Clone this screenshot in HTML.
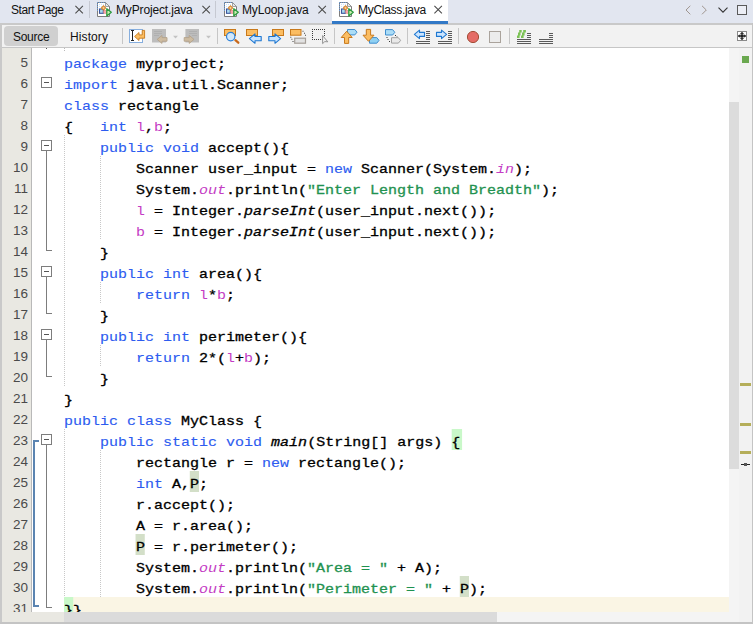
<!DOCTYPE html>
<html lang="en"><head><meta charset="utf-8"><title>MyClass.java - NetBeans</title>
<style>
html,body{margin:0;padding:0;background:#fff;}
body{width:756px;height:624px;overflow:hidden;position:relative;font-family:"Liberation Sans",sans-serif;}
#app{position:absolute;left:0;top:0;width:753px;height:624px;overflow:hidden;background:#f2f2f2;}
#app div,#app span,#app svg{box-sizing:border-box;}
#tabbar{position:absolute;left:0;top:0;width:756px;height:23px;background:#e2e6f0;}
#tabline{position:absolute;left:0;top:23px;width:756px;height:2px;background:#c9c9c9;}
#leftedge{position:absolute;left:0;top:23px;width:2px;height:601px;background:#c9c9c9;}
#toolbar{position:absolute;left:2px;top:25px;width:750px;height:22px;background:#f2f2f2;}
#tbline{position:absolute;left:2px;top:47px;width:750px;height:1px;background:#c6c6c6;}
#editor{position:absolute;left:2px;top:48px;width:727px;height:564px;background:#fff;overflow:hidden;}
#gutter{position:absolute;left:0;top:0;width:30px;height:564px;background:#e9e8e2;border-right:1px solid #b9b9b9;}
.num{position:absolute;right:3px;width:26px;height:21px;line-height:21px;margin-top:4px;text-align:right;font-size:13.5px;color:#4a4a4a;}
#curline{position:absolute;left:62px;top:549px;width:665px;height:15px;background:#faf5e4;}
#code{position:absolute;left:62px;top:6px;width:600px;height:570px;font-family:"Liberation Mono",monospace;font-size:13px;font-weight:normal;-webkit-text-stroke:0.3px #000;color:#000;transform:scaleX(1.153846);transform-origin:0 0;}
.ln{position:absolute;left:0;height:21px;line-height:21px;white-space:pre;}
.k{color:#2d5cf0;font-weight:normal;-webkit-text-stroke:0.12px #2d5cf0;}
.f{color:#c43cc4;font-weight:normal;-webkit-text-stroke:0;}
.sf{color:#c43cc4;font-weight:normal;font-style:italic;-webkit-text-stroke:0;}
.sm{font-style:italic;}
.s{color:#1f9250;-webkit-text-stroke:0.3px #1f9250;}
.hl,.hb{display:inline-block;height:21px;vertical-align:top;position:relative;}
.hl::before,.hb::before{content:"";position:absolute;left:0;right:0;top:-3px;height:21px;background:#d3dfc8;z-index:-1;}
.hb::before{background:#c9f8c9;}
.ig{position:absolute;width:1px;background-image:linear-gradient(to bottom,#c8c8c8 50%,transparent 50%);background-size:1px 2px;}
#guides{position:absolute;left:-2px;top:0;}
#folds{position:absolute;left:0;top:0;}
.fb{position:absolute;left:39px;width:11px;height:11px;border:1px solid #7d7d7d;background:#fff;}
.fb i{position:absolute;left:2px;top:4px;width:5px;height:1px;background:#555;}
.fl{position:absolute;left:44px;width:1px;background:#7d7d7d;}
.fe{position:absolute;left:44px;width:6px;height:1px;background:#7d7d7d;}
#vscroll{position:absolute;left:729px;top:48px;width:10px;height:564px;background:#f4f4f4;}
#vthumb{position:absolute;left:0;top:54px;width:10px;height:367px;background:#dcdcdc;}
#stripe{position:absolute;left:739px;top:48px;width:13px;height:574px;background:#f2f2f2;}
#stripe .ok{position:absolute;left:3px;top:8px;width:7px;height:7px;background:#6aa84f;}
#stripe .mk{position:absolute;left:1px;width:11px;height:3px;background:#b5ae5a;}
#stripe .caret{position:absolute;left:2px;top:416px;width:9px;height:1px;background:#222;}
#stripe .caret b{position:absolute;left:3px;top:-1px;width:3px;height:3px;background:#555;}
#rightedge{position:absolute;left:752px;top:23px;width:1px;height:601px;background:#c4c4c4;}
#hscroll{position:absolute;left:2px;top:612px;width:727px;height:10px;background:#f4f4f4;border-left:62px solid #e9e8e2;}
#hthumb{position:absolute;left:0;top:0;width:433px;height:10px;background:#dbdbdb;}
#corner{position:absolute;left:729px;top:612px;width:10px;height:10px;background:#f4f4f4;}
#bottomedge{position:absolute;left:0;top:622px;width:753px;height:2px;background:#c4c4c4;}
.tab{position:absolute;top:0;height:23px;}
.tab.sel{background:#fff;}
.tt{position:absolute;top:0;height:23px;line-height:20px;font-size:12px;color:#111;white-space:nowrap;}
.tx{position:absolute;top:5px;}
.ti{position:absolute;top:2px;}
.tsep{position:absolute;top:1px;width:1px;height:17px;background:#c6c9d2;}
#tabsel{position:absolute;left:332px;top:21px;width:116px;height:3px;background:#3279c6;z-index:3;}
#tabctl{position:absolute;left:682px;top:4px;}
#srcbtn{position:absolute;left:2px;top:1px;width:54px;height:20px;border-radius:4px;background:#d0d0d0;}
.tbt{position:absolute;top:0;height:22px;line-height:25px;font-size:12px;color:#111;white-space:nowrap;}
#tbicons{position:absolute;left:0;top:0;}
#brk{position:absolute;left:31px;top:392px;width:6px;height:167px;border:2px solid #5b84b1;border-right:0;}
.dot{position:absolute;width:1px;height:1px;}
.hb.w::before{right:-1.6px;}

</style></head>
<body>
<div id="app">
<div id="tabbar">
<svg width="0" height="0" style="position:absolute"><defs>
<g id="jicon">
  <path d="M0.5 0.5H8.5L12.5 4.5V14.5H0.5Z" fill="#fff" stroke="#7d7d7d"/>
  <path d="M8.5 0.5V4.5H12.5Z" fill="#e9e9e9" stroke="#8a8a8a" stroke-width="0.8"/>
  <path d="M2 2.5h5M2 4.5h3" stroke="#cfe3f7" stroke-width="1" stroke-dasharray="1 1"/>
  <path d="M0.5 0V10M0 0.5H8.5" fill="none" stroke="#6d9bd6" stroke-dasharray="1 1" stroke-width="1"/>
  <rect x="2.5" y="7" width="3.8" height="4.3" fill="#a9d8ee" stroke="#3c559c" stroke-width="1.1"/>
  <rect x="5" y="4.4" width="3" height="3" transform="rotate(45 6.5 5.9)" fill="#f6cf95" stroke="#d5822a" stroke-width="1"/>
  <circle cx="8.1" cy="9.9" r="1.6" fill="#f9a7b4" stroke="#e0806a" stroke-width="0.6"/>
  <path d="M9.8 6.7V13.9L14.3 10.3Z" fill="#cdf0b4" stroke="#2d9a3f" stroke-width="1.3" stroke-linejoin="round"/>
</g>
<g id="tx"><path d="M0.4 0.9L7.9 8.4M7.9 0.9L0.4 8.4" stroke="#4a4a4a" stroke-width="1.05" fill="none"/></g>
</defs></svg>
<div class="tab" style="left:0;width:89px"><span class="tt" style="left:11px;letter-spacing:-0.41px">Start Page</span><svg class="tx" style="left:75px" width="9" height="9"><use href="#tx"/></svg></div>
<div class="tsep" style="left:89px"></div>
<div class="tab" style="left:90px;width:125px"><svg class="ti" style="left:7px" width="16" height="16"><use href="#jicon"/></svg><span class="tt" style="left:26px;letter-spacing:-0.15px">MyProject.java</span><svg class="tx" style="left:112px" width="9" height="9"><use href="#tx"/></svg></div>
<div class="tsep" style="left:215px"></div>
<div class="tab" style="left:216px;width:116px"><svg class="ti" style="left:8px" width="16" height="16"><use href="#jicon"/></svg><span class="tt" style="left:26px;letter-spacing:-0.13px">MyLoop.java</span><svg class="tx" style="left:102px" width="9" height="9"><use href="#tx"/></svg></div>
<div class="tab sel" style="left:332px;width:116px"><svg class="ti" style="left:7px" width="16" height="16"><use href="#jicon"/></svg><span class="tt" style="left:26px;letter-spacing:-0.3px">MyClass.java</span><svg class="tx" style="left:102px" width="9" height="9"><use href="#tx"/></svg></div>
<div id="tabsel"></div>
<svg id="tabctl" width="70" height="16" viewBox="0 0 70 16">
  <path d="M8.3 1.8L4 6L8.3 10.3" fill="none" stroke="#a09690" stroke-width="1"/>
  <path d="M20 1.8L24.3 6L20 10.3" fill="none" stroke="#a09690" stroke-width="1"/>
  <path d="M36.5 3.6L41 8.2L45.5 3.6" fill="none" stroke="#333" stroke-width="1.1"/>
  <rect x="55.5" y="1.5" width="9" height="9" fill="#eceef5" stroke="#5a5a5a" stroke-width="1"/>
</svg>

</div>
<div id="tabline"></div>
<div id="leftedge"></div>
<div id="toolbar">
<div id="srcbtn"></div>
<span class="tbt" style="left:11px;letter-spacing:-0.29px">Source</span>
<span class="tbt" style="left:68px;letter-spacing:0.1px">History</span>
<svg id="tbicons" width="750" height="22" viewBox="2 25 750 22">
<g fill="none" stroke="#c6c6c6" stroke-width="1">
  <path d="M122.5 28V44M217.5 28V44M334.5 28V44M407.5 28V44M458.5 28V44M509.5 28V44"/>
</g>
<!-- last edit -->
<g>
  <rect x="129.5" y="29.5" width="13" height="13" fill="#fff" stroke="#86aede"/>
  <path d="M131 30.5h3M131 40.5h3M132.5 30.5v10" stroke="#222" stroke-width="1" fill="none" shape-rendering="crispEdges"/>
  <path d="M134.6 36.5L139 32.5V34.9H142.2V30.4H144.6V38.2H139V40.5Z" fill="#fbbd62" stroke="#c8791b" stroke-width="0.9" stroke-linejoin="round"/>
</g>
<!-- back disabled -->
<g>
  <rect x="152" y="29" width="14" height="13.5" fill="#bdbdbd"/>
  <path d="M154 31.5h8M154 33.5h8M154 35.5h5" stroke="#b0b0b0" stroke-width="1"/>
  <path d="M157.2 39.4L162 35.4V37.6H167V41.2H162V43.4Z" fill="#cebca1" stroke="#b3a38b" stroke-width="0.9" stroke-linejoin="round"/>
  <path d="M173 35.8H178L175.5 38.4Z" fill="#c3c3c3"/>
</g>
<!-- forward disabled -->
<g>
  <rect x="185.4" y="29" width="13.6" height="13.5" fill="#bdbdbd"/>
  <path d="M189 31.5h8M189 33.5h8M192 35.5h5" stroke="#b0b0b0" stroke-width="1"/>
  <path d="M194 39.4L189.2 35.4V37.6H184.2V41.2H189.2V43.4Z" fill="#cebca1" stroke="#b3a38b" stroke-width="0.9" stroke-linejoin="round"/>
  <path d="M206 35.8H211L208.5 38.4Z" fill="#c3c3c3"/>
</g>
<!-- find -->
<g>
  <rect x="224.5" y="29.5" width="11" height="6" fill="#fbbd62" stroke="#c8791b"/>
  <path d="M235.4 40.2L238.3 42.7" stroke="#c8691c" stroke-width="2.3" stroke-linecap="round"/>
  <circle cx="230.7" cy="36.6" r="4.2" fill="#d2e8fb" stroke="#2b80d8" stroke-width="1.2"/>
</g>
<!-- find prev -->
<g>
  <rect x="246.5" y="29.5" width="11" height="6" fill="#fbbd62" stroke="#c8791b"/>
  <path d="M249.4 38.6L255 33.9V36.5H261.2V40.7H255V43.3Z" fill="#c9e4ff" stroke="#1f78d1" stroke-width="1.1" stroke-linejoin="round"/>
</g>
<!-- find next -->
<g>
  <rect x="272.5" y="29.5" width="11" height="6" fill="#fbbd62" stroke="#c8791b"/>
  <path d="M280.6 38.6L275 33.9V36.5H268.8V40.7H275V43.3Z" fill="#c9e4ff" stroke="#1f78d1" stroke-width="1.1" stroke-linejoin="round"/>
</g>
<!-- toggle highlight -->
<g>
  <rect x="290.5" y="29.5" width="10.5" height="5.7" fill="#fbbd62" stroke="#c8791b"/>
  <path d="M302.5 30.7h1v1h-1zM304 32.7h1v1h-1zM305 34.8h1v1h-1zM290.3 36.7h1v1h-1zM291.4 38.8h1v1h-1zM292.5 41h1v1h-1z" fill="#444"/>
  <rect x="294.7" y="38.2" width="10.8" height="5" fill="#e2e2e2" stroke="#a59f99" stroke-width="1.2"/>
</g>
<!-- rect select -->
<g>
  <path d="M312 29.5H325M312 39.5H325M312.5 29V40M324.5 29V36" fill="none" stroke="#3a3a3a" stroke-dasharray="1 1" shape-rendering="crispEdges"/>
  <path d="M322.6 35.6V43.6L324.8 41.6L327.8 41.8Z" fill="#f0f0f0" stroke="#8a8a8a" stroke-width="0.9" stroke-linejoin="round"/>
</g>
<!-- prev bookmark -->
<g>
  <path d="M347.5 29.5H354.8L357 32.2L354.8 34.9H347.5Z" fill="#aadcf6" stroke="#3f8fd0" stroke-width="1"/>
  <path d="M346.7 31.2L352.2 37.5H348.7V43.4H344.5V37.5H341.2Z" fill="#fbbd62" stroke="#c8791b" stroke-width="1" stroke-linejoin="round"/>
</g>
<!-- next bookmark -->
<g>
  <path d="M369.5 37.6H376.8L379 40.4L376.8 43.2H369.5Z" fill="#8fd0f2" stroke="#3f8fd0" stroke-width="1"/>
  <path d="M366.3 29.4H370.6V35.2H374L368.5 41.3L363 35.2H366.3Z" fill="#fbbd62" stroke="#c8791b" stroke-width="1" stroke-linejoin="round"/>
</g>
<!-- toggle bookmark -->
<g>
  <path d="M385.5 29.6H392.6L394.8 32.3L392.6 35H385.5Z" fill="#aadcf6" stroke="#3f8fd0" stroke-width="1"/>
  <path d="M386.5 37h1v1h-1zM387.5 39h1v1h-1zM389 41h1v1h-1zM395 35h1v1h-1zM396.5 36.4h1v0.8h-1z" fill="#333"/>
  <path d="M391.5 37.7H398.4L400.6 40.4L398.4 43.1H391.5Z" fill="#e9e9e9" stroke="#a0a0a0" stroke-width="1"/>
</g>
<!-- shift left -->
<g>
  <path d="M414.4 34.4L419.5 30.2V32.4H424.5V36.4H419.5V38.6Z" fill="#cbe5ff" stroke="#1f78d1" stroke-width="1.1" stroke-linejoin="round"/>
  <path d="M426 31.5h4M426 33.5h4M426 35.5h4M426 37.5h4M426 39.5h4M416 41.5h14M416 43.5h14" stroke="#5a5a5a" stroke-width="1"/>
</g>
<!-- shift right -->
<g>
  <path d="M446.6 34.4L441.5 30.2V32.4H436.5V36.4H441.5V38.6Z" fill="#cbe5ff" stroke="#1f78d1" stroke-width="1.1" stroke-linejoin="round"/>
  <path d="M448 31.5h4M448 33.5h4M448 35.5h4M448 37.5h4M448 39.5h4M438 41.5h14M438 43.5h14" stroke="#5a5a5a" stroke-width="1"/>
</g>
<!-- macro rec -->
<circle cx="473" cy="37" r="5.6" fill="#e56c66" stroke="#a34d36" stroke-width="1"/>
<rect x="489.5" y="31.5" width="11" height="11" fill="#ececec" stroke="#aaa39c" stroke-width="1"/>
<!-- comment -->
<g>
  <path d="M519.2 30H521.7V32.6H520.5V35.4H519.6V38H517V35.4H518V32.6H519.2ZM523.2 30H525.9V32.6H524.6V35.4H523.6V38H521V35.4H522V32.6H523.2Z" fill="#7cc255"/>
  <path d="M527 33.5h4M527 35.5h4M527 37.5h4M517 39.5h14M517 41.5h14M517 43.5h14" stroke="#5a5a5a" stroke-width="1"/>
</g>
<!-- uncomment -->
<g>
  <path d="M549 33.5h4M549 35.5h4M549 37.5h4M539 39.5h14M539 41.5h14M539 43.5h14" stroke="#5a5a5a" stroke-width="1"/>
</g>
<!-- expand -->
<g>
  <rect x="737.5" y="31.5" width="9" height="9" fill="#fff" stroke="#8a8a8a"/>
  <path d="M742 32.5V39.5M738.5 36H745.5" stroke="#111" stroke-width="1.4"/>
  <path d="M740.5 34L742 32.5L743.5 34M740.5 38L742 39.5L743.5 38M740 34.5L738.5 36L740 37.5M744 34.5L745.5 36L744 37.5" stroke="#111" stroke-width="1" fill="none"/>
</g>
</svg>

</div>
<div id="tbline"></div>
<div id="editor">
  <div id="gutter">
<div class="num" style="top:0px">5</div>
<div class="num" style="top:21px">6</div>
<div class="num" style="top:42px">7</div>
<div class="num" style="top:63px">8</div>
<div class="num" style="top:84px">9</div>
<div class="num" style="top:105px">10</div>
<div class="num" style="top:126px">11</div>
<div class="num" style="top:147px">12</div>
<div class="num" style="top:168px">13</div>
<div class="num" style="top:189px">14</div>
<div class="num" style="top:210px">15</div>
<div class="num" style="top:231px">16</div>
<div class="num" style="top:252px">17</div>
<div class="num" style="top:273px">18</div>
<div class="num" style="top:294px">19</div>
<div class="num" style="top:315px">20</div>
<div class="num" style="top:336px">21</div>
<div class="num" style="top:357px">22</div>
<div class="num" style="top:378px">23</div>
<div class="num" style="top:399px">24</div>
<div class="num" style="top:420px">25</div>
<div class="num" style="top:441px">26</div>
<div class="num" style="top:462px">27</div>
<div class="num" style="top:483px">28</div>
<div class="num" style="top:504px">29</div>
<div class="num" style="top:525px">30</div>
<div class="num" style="top:546px">31</div>
  </div>
  <div id="curline"></div>
  <div id="guides">
<div class="ig" style="left:64px;top:87px;height:252px"></div>
<div class="ig" style="left:100px;top:108px;height:84px"></div>
<div class="ig" style="left:100px;top:234px;height:21px"></div>
<div class="ig" style="left:100px;top:297px;height:21px"></div>
<div class="ig" style="left:64px;top:381px;height:168px"></div>
<div class="ig" style="left:100px;top:402px;height:147px"></div>
  </div>
  <div id="brk"></div>
  <div class="dot" style="left:44px;top:0;background:#555"></div>
  <div class="dot" style="left:62px;top:0;background:#bbb"></div>
  <div class="dot" style="left:62px;top:2px;background:#bbb"></div>
  <div id="folds">
<div class="fl" style="top:103px;height:99px"></div>
<div class="fe" style="top:202px"></div>
<div class="fl" style="top:229px;height:36px"></div>
<div class="fe" style="top:265px"></div>
<div class="fl" style="top:292px;height:36px"></div>
<div class="fe" style="top:328px"></div>
<div class="fl" style="top:397px;height:162px"></div>
<div class="fe" style="top:559px"></div>
<div class="fb" style="top:29px"><i></i></div>
<div class="fb" style="top:92px"><i></i></div>
<div class="fb" style="top:218px"><i></i></div>
<div class="fb" style="top:281px"><i></i></div>
<div class="fb" style="top:386px"><i></i></div>
  </div>
  <div id="code">
<div class="ln" style="top:0px"><span class="k">package</span> myproject;</div>
<div class="ln" style="top:21px"><span class="k">import</span> java.util.Scanner;</div>
<div class="ln" style="top:42px"><span class="k">class</span> rectangle</div>
<div class="ln" style="top:63px">{   <span class="k">int</span> <span class="f">l</span>,<span class="f">b</span>;</div>
<div class="ln" style="top:84px">    <span class="k">public</span> <span class="k">void</span> accept(){</div>
<div class="ln" style="top:105px">        Scanner user_input = <span class="k">new</span> Scanner(System.<span class="sf">in</span>);</div>
<div class="ln" style="top:126px">        System.<span class="sf">out</span>.println(<span class="s">"Enter Length and Breadth"</span>);</div>
<div class="ln" style="top:147px">        <span class="f">l</span> = Integer.<span class="sm">parseInt</span>(user_input.next());</div>
<div class="ln" style="top:168px">        <span class="f">b</span> = Integer.<span class="sm">parseInt</span>(user_input.next());</div>
<div class="ln" style="top:189px">    }</div>
<div class="ln" style="top:210px">    <span class="k">public</span> <span class="k">int</span> area(){</div>
<div class="ln" style="top:231px">        <span class="k">return</span> <span class="f">l</span>*<span class="f">b</span>;</div>
<div class="ln" style="top:252px">    }</div>
<div class="ln" style="top:273px">    <span class="k">public</span> <span class="k">int</span> perimeter(){</div>
<div class="ln" style="top:294px">        <span class="k">return</span> 2*(<span class="f">l</span>+<span class="f">b</span>);</div>
<div class="ln" style="top:315px">    }</div>
<div class="ln" style="top:336px">}</div>
<div class="ln" style="top:357px"><span class="k">public</span> <span class="k">class</span> MyClass {</div>
<div class="ln" style="top:378px">    <span class="k">public</span> <span class="k">static</span> <span class="k">void</span> <span class="sm">main</span>(String[] args) <span class="hb w">{</span></div>
<div class="ln" style="top:399px">        rectangle r = <span class="k">new</span> rectangle();</div>
<div class="ln" style="top:420px">        <span class="k">int</span> A,<span class="hl">P</span>;</div>
<div class="ln" style="top:441px">        r.accept();</div>
<div class="ln" style="top:462px">        A = r.area();</div>
<div class="ln" style="top:483px">        <span class="hl">P</span> = r.perimeter();</div>
<div class="ln" style="top:504px">        System.<span class="sf">out</span>.println(<span class="s">"Area = "</span> + A);</div>
<div class="ln" style="top:525px">        System.<span class="sf">out</span>.println(<span class="s">"Perimeter = "</span> + <span class="hl">P</span>);</div>
<div class="ln" style="top:546px"><span class="hb">}</span>}</div>
  </div>
</div>
<div id="vscroll"><div id="vthumb"></div></div>
<div id="stripe">
  <div class="ok"></div>
  <div class="mk" style="top:335px"></div>
  <div class="mk" style="top:375px"></div>
  <div class="mk" style="top:403px"></div>
  <div class="caret"><b></b></div>
</div>
<div id="rightedge"></div>
<div id="hscroll"><div id="hthumb"></div></div>
<div id="corner"></div>
<div id="bottomedge"></div>
</div>
</body></html>
